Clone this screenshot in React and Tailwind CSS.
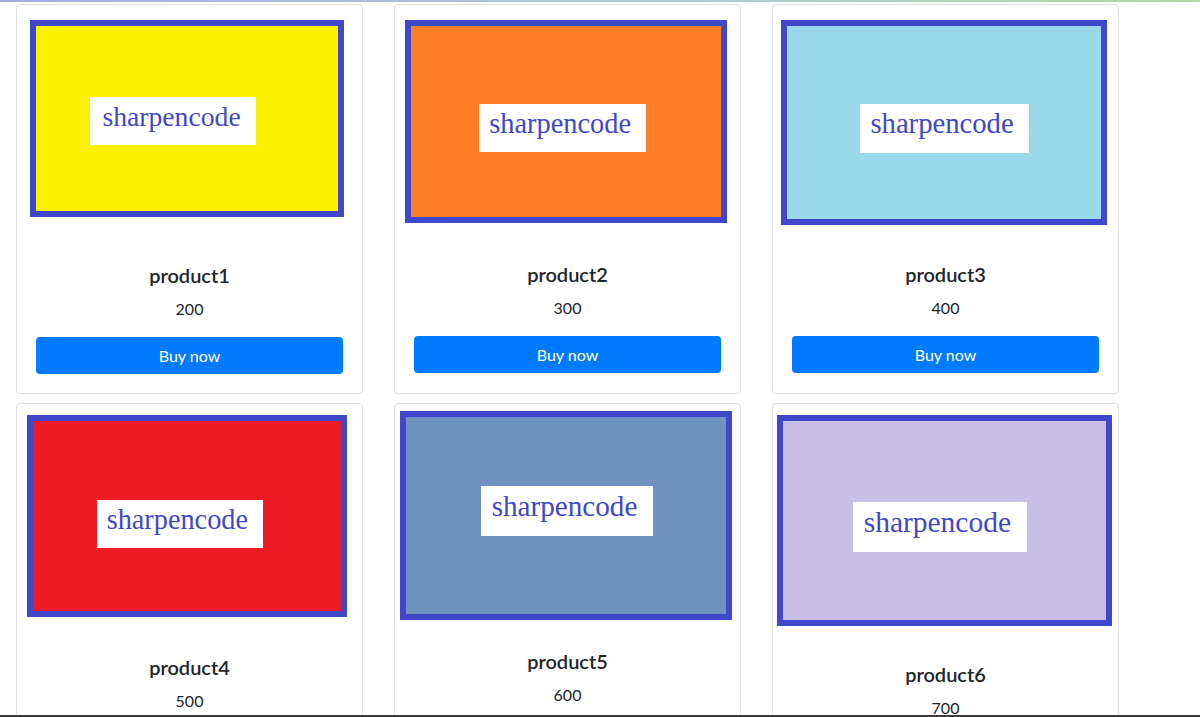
const products = [
  {
    name: 'product1', price: 200, fill: '#fff200',
    wrap: 'h-[259px] pt-[15px] pl-[13px]',
    w: 314, h: 197, box: [60, 77, 166, 48], tx: 12.4, tw: 138.3, ty: 29.4,
  },
  {
    name: 'product2', price: 300, fill: '#ff7f27',
    wrap: 'h-[257px] pt-[15px] pl-[10px]',
    w: 322, h: 203, box: [74, 84, 167, 48], tx: 10.3, tw: 141.7, ty: 28.6,
  },
  {
    name: 'product3', price: 400, fill: '#99d9ea',
    wrap: 'h-[257px] pt-[15px] pl-[8px]',
    w: 326, h: 205, box: [79, 84, 169, 49], tx: 10.4, tw: 143.3, ty: 28.6,
  },
  {
    name: 'product4', price: 500, fill: '#ed1c24',
    wrap: 'h-[251px] pt-[11px] pl-[10px]',
    w: 320, h: 202, box: [70, 85, 166, 48], tx: 9.7, tw: 141.3, ty: 28.7,
  },
  {
    name: 'product5', price: 600, fill: '#7092be',
    wrap: 'h-[245px] pt-[7px] pl-[5px]',
    w: 332, h: 209, box: [81, 75, 172, 50], tx: 10.7, tw: 145.7, ty: 30.4,
  },
  {
    name: 'product6', price: 700, fill: '#c8bfe7',
    wrap: 'h-[258px] pt-[11px] pl-[4px]',
    w: 335, h: 211, box: [76, 87, 174, 50], tx: 10.7, tw: 147.3, ty: 30,
  },
]

function ProductImage({ p }) {
  const [bx, by, bw, bh] = p.box
  return (
    <svg width={p.w} height={p.h} viewBox={`0 0 ${p.w} ${p.h}`} className="block">
      <rect x="3" y="3" width={p.w - 6} height={p.h - 6} fill={p.fill} stroke="#3f48cc" strokeWidth="6" />
      <rect x={bx} y={by} width={bw} height={bh} fill="#ffffff" />
      <text
        x={bx + p.tx}
        y={by + p.ty}
        textLength={p.tw}
        lengthAdjust="spacingAndGlyphs"
        fill="#3f48cc"
        fontFamily="'Liberation Serif', serif"
        fontSize={p.tw * 0.205}
      >
        sharpencode
      </text>
    </svg>
  )
}

function ProductCard({ p }) {
  return (
    <div className="h-[390px] flex flex-col border border-[#dfdfdf] rounded-[4px] bg-white overflow-hidden">
      <div className={p.wrap}>
        <ProductImage p={p} />
      </div>
      <div className="flex flex-col items-center px-[19px] pb-[19px]">
        <h5 className="text-[20px] leading-[24px] font-semibold text-[#212529] mb-[10px]">{p.name}</h5>
        <p className="text-[16px] leading-[24px] text-[#212529]">{p.price}</p>
        <button className="mt-[16px] w-full h-[37px] rounded-[4px] bg-[#007bff] text-white text-[16px] leading-[24px]">
          Buy now
        </button>
      </div>
    </div>
  )
}

export default function App() {
  return (
    <div className="h-[717px] flex flex-col bg-white overflow-hidden font-['Lato','Noto_Sans',sans-serif]">
      <div className="h-[2px] shrink-0 bg-gradient-to-r from-[#a9ace6] via-[#b2c6d8] to-[#b6d6a4]" />
      <div className="flex-1 overflow-hidden pt-[2px] pl-[16px]">
        <div className="grid grid-cols-[347px_347px_347px] gap-x-[31px] gap-y-[9px]">
          {products.map((p) => (
            <ProductCard key={p.name} p={p} />
          ))}
        </div>
      </div>
      <div className="h-[2px] shrink-0 bg-[#3a3a3a]" />
    </div>
  )
}
